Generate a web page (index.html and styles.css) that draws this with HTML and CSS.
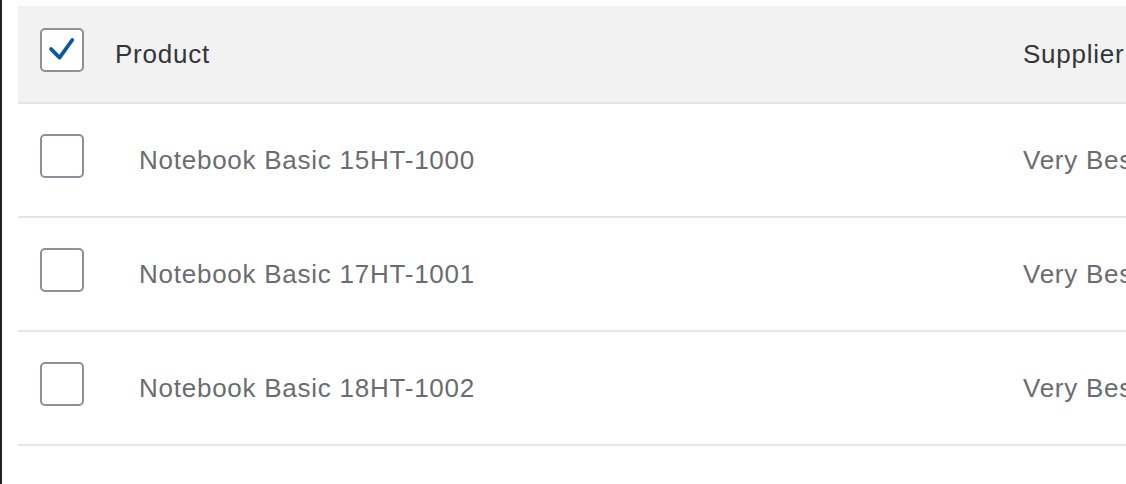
FILE: index.html
```html
<!DOCTYPE html>
<html>
<head>
<meta charset="utf-8">
<link rel="stylesheet" href="styles.css">
</head>
<body>
<div class="page">
  <div class="table">
    <div class="row head">
      <div class="cell sel">
        <span class="cb checked">
          <svg viewBox="0 0 44 44" width="40" height="40"><path d="M10 21 L19.3 30.3 L33.3 11" fill="none" stroke="#0b57a4" stroke-width="4.2" stroke-linecap="round" stroke-linejoin="round"/></svg>
        </span>
      </div>
      <div class="cell prod">Product</div>
      <div class="cell supp">Supplier</div>
    </div>
    <div class="row item">
      <div class="cell sel"><span class="cb"></span></div>
      <div class="cell prod">Notebook Basic 15HT-1000</div>
      <div class="cell supp">Very Best Screens</div>
    </div>
    <div class="row item">
      <div class="cell sel"><span class="cb"></span></div>
      <div class="cell prod">Notebook Basic 17HT-1001</div>
      <div class="cell supp">Very Best Screens</div>
    </div>
    <div class="row item">
      <div class="cell sel"><span class="cb"></span></div>
      <div class="cell prod">Notebook Basic 18HT-1002</div>
      <div class="cell supp">Very Best Screens</div>
    </div>
  </div>
</div>
</body>
</html>
```
FILE: styles.css
```css
html, body {
  margin: 0;
  padding: 0;
  background: #ffffff;
  height: 100%;
}
body {
  overflow: hidden;
  font-family: "Liberation Sans", Arial, sans-serif;
}
.page {
  height: 100%;
  border-left: 2px solid #222222;
  padding: 6px 0 0 16px;
  box-sizing: border-box;
  overflow: hidden;
}
.table {
  width: 1300px;
}
.row {
  display: flex;
  align-items: center;
  white-space: nowrap;
}
.head {
  height: 96px;
  background: #f2f2f2;
  border-bottom: 2px solid #e4e4e4;
}
.item {
  height: 112px;
  background: #ffffff;
  border-bottom: 2px solid #e5e5e5;
}
.cell {
  font-size: 26px;
  letter-spacing: 0.75px;
}
.sel {
  width: 80px;
  flex: none;
  padding-left: 22px;
  box-sizing: border-box;
  align-self: flex-start;
}
.head .sel { padding-top: 22px; }
.item .sel { padding-top: 30px; }
.cb {
  display: flex;
  align-items: center;
  justify-content: center;
  width: 44px;
  height: 44px;
  box-sizing: border-box;
  border: 2px solid #89919a;
  border-radius: 5px;
  background: #ffffff;
}
.cb svg { display: block; }
.prod {
  width: 907px;
  flex: none;
  box-sizing: border-box;
}
.head .prod { padding-left: 17px; color: #32363a; }
.item .prod { padding-left: 41px; color: #6a6d70; }
.supp {
  padding-left: 18px;
}
.head .supp { color: #32363a; }
.item .supp { color: #6a6d70; }
```
